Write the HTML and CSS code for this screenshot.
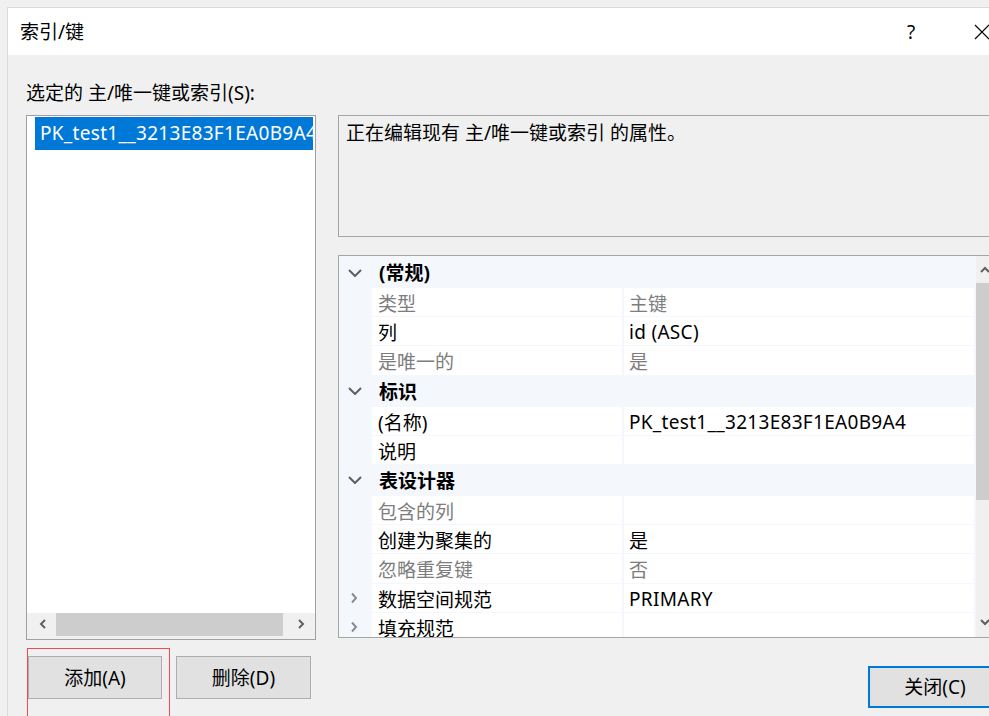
FILE: index.html
```html
<!DOCTYPE html>
<html lang="zh-CN">
<head>
<meta charset="utf-8">
<title>索引/键</title>
<link rel="stylesheet" href="styles.css">
</head>
<body>
<div class="window">
  <div class="titlebar">
    <span class="title">索引/键</span>
    <span class="help">?</span>
    <svg class="close-x" width="16" height="16" viewBox="0 0 16 16"><path d="M1 1 L15 15 M15 1 L1 15" stroke="#000" stroke-width="1.2" fill="none"/></svg>
  </div>
  <div class="content">
    <div class="main">
      <div class="left">
        <div class="label">选定的 主/唯一键或索引(S):</div>
        <div class="listbox">
          <div class="list-items">
            <div class="list-item selected"><span class="latin">PK_test1__3213E83F1EA0B9A4</span></div>
          </div>
          <div class="hscroll">
            <svg class="arrow" width="10" height="10" viewBox="0 0 10 10"><path d="M7 1 L3 5 L7 9" stroke="#606060" stroke-width="2" fill="none"/></svg>
            <div class="htrack"><div class="hthumb"></div></div>
            <svg class="arrow" width="10" height="10" viewBox="0 0 10 10"><path d="M3 1 L7 5 L3 9" stroke="#606060" stroke-width="2" fill="none"/></svg>
          </div>
        </div>
      </div>
      <div class="right">
        <div class="desc">正在编辑现有 主/唯一键或索引 的属性。</div>
        <div class="propgrid">
          <div class="rows">
            <div class="cat">
              <span class="gutter"><svg width="14" height="8" viewBox="0 0 14 8"><path d="M1 1 L7 7 L13 1" stroke="#5f5f5f" stroke-width="2" fill="none"/></svg></span>
              <span class="cat-name">(常规)</span>
            </div>
            <div class="prop ro"><span class="gutter"></span><span class="pname">类型</span><span class="pval">主键</span></div>
            <div class="prop"><span class="gutter"></span><span class="pname">列</span><span class="pval"><span class="latin">id (ASC)</span></span></div>
            <div class="prop ro"><span class="gutter"></span><span class="pname">是唯一的</span><span class="pval">是</span></div>
            <div class="cat">
              <span class="gutter"><svg width="14" height="8" viewBox="0 0 14 8"><path d="M1 1 L7 7 L13 1" stroke="#5f5f5f" stroke-width="2" fill="none"/></svg></span>
              <span class="cat-name">标识</span>
            </div>
            <div class="prop"><span class="gutter"></span><span class="pname">(名称)</span><span class="pval"><span class="latin">PK_test1__3213E83F1EA0B9A4</span></span></div>
            <div class="prop"><span class="gutter"></span><span class="pname">说明</span><span class="pval"></span></div>
            <div class="cat">
              <span class="gutter"><svg width="14" height="8" viewBox="0 0 14 8"><path d="M1 1 L7 7 L13 1" stroke="#5f5f5f" stroke-width="2" fill="none"/></svg></span>
              <span class="cat-name">表设计器</span>
            </div>
            <div class="prop ro"><span class="gutter"></span><span class="pname">包含的列</span><span class="pval"></span></div>
            <div class="prop"><span class="gutter"></span><span class="pname">创建为聚集的</span><span class="pval">是</span></div>
            <div class="prop ro"><span class="gutter"></span><span class="pname">忽略重复键</span><span class="pval">否</span></div>
            <div class="prop"><span class="gutter"><svg class="expand" width="8" height="12" viewBox="0 0 8 12"><path d="M2 1.5 L6 6 L2 10.5" stroke="#8c8c8c" stroke-width="2" fill="none"/></svg></span><span class="pname">数据空间规范</span><span class="pval"><span class="latin">PRIMARY</span></span></div>
            <div class="prop"><span class="gutter"><svg class="expand" width="8" height="12" viewBox="0 0 8 12"><path d="M2 1.5 L6 6 L2 10.5" stroke="#8c8c8c" stroke-width="2" fill="none"/></svg></span><span class="pname">填充规范</span><span class="pval"></span></div>
          </div>
          <div class="vscroll">
            <svg class="varrow" width="10" height="8" viewBox="0 0 10 8"><path d="M1 6 L5 2 L9 6" stroke="#606060" stroke-width="2" fill="none"/></svg>
            <div class="vtrack"><div class="vthumb"></div></div>
            <svg class="varrow" width="10" height="8" viewBox="0 0 10 8"><path d="M1 2 L5 6 L9 2" stroke="#606060" stroke-width="2" fill="none"/></svg>
          </div>
        </div>
      </div>
    </div>
    <div class="buttons">
      <button class="btn btn-add">添加(A)</button>
      <button class="btn btn-del">删除(D)</button>
      <button class="btn btn-close">关闭(C)</button>
    </div>
  </div>
</div>
<div class="annotation"></div>
</body>
</html>
```

FILE: styles.css
```css
* { box-sizing: border-box; }
html, body {
  margin: 0;
  padding: 0;
}
body {
  width: 989px;
  height: 716px;
  overflow: hidden;
  background: #f0f0f0;
  font-family: "Noto Sans", "Noto Sans CJK SC", sans-serif;
  font-size: 19px;
  color: #000;
  position: relative;
}
.latin {
  letter-spacing: 0.3px;
}
.window {
  margin: 7px 0 0 7px;
  border-top: 1px solid #dadada;
  border-left: 1px solid #dadada;
  width: 1000px;
  height: 720px;
  background: #f0f0f0;
}
.titlebar {
  height: 47px;
  background: #fff;
  display: flex;
  align-items: center;
  padding-left: 12px;
}
.title {
  line-height: 24px;
}
.help {
  margin-left: auto;
  line-height: 24px;
  font-size: 19px;
  width: 10px;
  margin-right: 57px;
}
.close-x {
  margin-right: 17px;
  display: block;
}
.content {
  padding-left: 18px;
}
.main {
  display: flex;
  align-items: flex-start;
}
.left {
  width: 290px;
  flex: none;
}
.label {
  height: 60px;
  padding-top: 26px;
  line-height: 24px;
  color: #000;
}
.listbox {
  height: 525px;
  border: 1px solid #a0a0a0;
  background: #fff;
  display: flex;
  flex-direction: column;
}
.list-items {
  flex: 1;
  overflow: hidden;
  padding: 1px 0 0 8px;
}
.list-item {
  height: 33px;
  line-height: 33px;
  padding-left: 5px;
  white-space: nowrap;
  overflow: hidden;
  width: 278px;
}
.list-item.selected {
  background: #0078d7;
  color: #fff;
}
.hscroll {
  height: 26px;
  background: #f0f0f0;
  display: flex;
  align-items: flex-start;
}
.hscroll .arrow {
  flex: none;
  margin: 6px 4px 0;
  display: block;
}
.hscroll .arrow:first-child { margin-left: 11px; margin-right: 8px; }
.hscroll .arrow:last-child { margin-left: 5px; margin-right: 9px; }
.htrack {
  flex: 1;
  height: 23px;
}
.hthumb {
  width: 227px;
  height: 23px;
  background: #cdcdcd;
}
.right {
  margin-left: 22px;
  width: 656px;
  flex: none;
}
.desc {
  margin-top: 60px;
  height: 122px;
  border: 1px solid #a5a5a5;
  background: #f0f0f0;
  padding: 5px 0 0 7px;
  line-height: 24px;
}
.propgrid {
  margin-top: 18px;
  height: 383px;
  border: 1px solid #a5a5a5;
  background: #f4f7fc;
  display: flex;
  overflow: hidden;
}
.rows {
  width: 637px;
  flex: none;
  padding-top: 1px;
}
.cat {
  height: 31px;
  display: flex;
  align-items: center;
  font-weight: 700;
}
.gutter {
  width: 33px;
  flex: none;
  height: 100%;
  display: flex;
  align-items: center;
  justify-content: flex-start;
}
.cat .gutter svg { margin-left: 9px; display: block; }
.gutter .expand { margin-left: 11px; display: block; }
.cat-name {
  padding-left: 7px;
  padding-top: 1px;
  line-height: 24px;
}
.prop {
  height: 29.2px;
  display: flex;
  padding-bottom: 1px;
}
.pname {
  width: 250px;
  flex: none;
  background: #fff;
  padding-left: 6px;
  padding-top: 2px;
  display: flex;
  align-items: center;
  margin-right: 2px;
  white-space: nowrap;
}
.pval {
  flex: 1;
  background: #fff;
  padding-left: 5px;
  padding-top: 2px;
  display: flex;
  align-items: center;
  margin-right: 2px;
  white-space: nowrap;
}
.prop.ro .pname, .prop.ro .pval {
  color: #7d7d7d;
}
.vscroll {
  width: 17px;
  flex: none;
  background: #f0f0f0;
  display: flex;
  flex-direction: column;
  align-items: center;
}
.varrow {
  display: block;
  flex: none;
}
.varrow:first-child { margin: 10px 0 9px; }
.varrow:last-child { margin: 0 0 11px; }
.vtrack {
  flex: 1;
  width: 17px;
}
.vthumb {
  width: 17px;
  height: 217px;
  background: #cdcdcd;
}
.buttons {
  display: flex;
  align-items: flex-start;
  margin-top: 16px;
}
.btn {
  font-family: "Noto Sans", "Noto Sans CJK SC", sans-serif;
  font-size: 19px;
  color: #000;
  background: #e1e1e1;
  border: 1px solid #adadad;
  height: 43px;
  padding: 0;
  line-height: 24px;
  flex: none;
}
.btn-add {
  margin-left: 2px;
  width: 134px;
}
.btn-del {
  margin-left: 14px;
  width: 135px;
}
.btn-close {
  margin-left: 557px;
  margin-top: 10px;
  width: 134px;
  height: 42px;
  border: 2px solid #0078d7;
}
.annotation {
  position: absolute;
  left: 27px;
  top: 648px;
  width: 143px;
  height: 80px;
  border: 1px solid #ef4b53;
}
```
